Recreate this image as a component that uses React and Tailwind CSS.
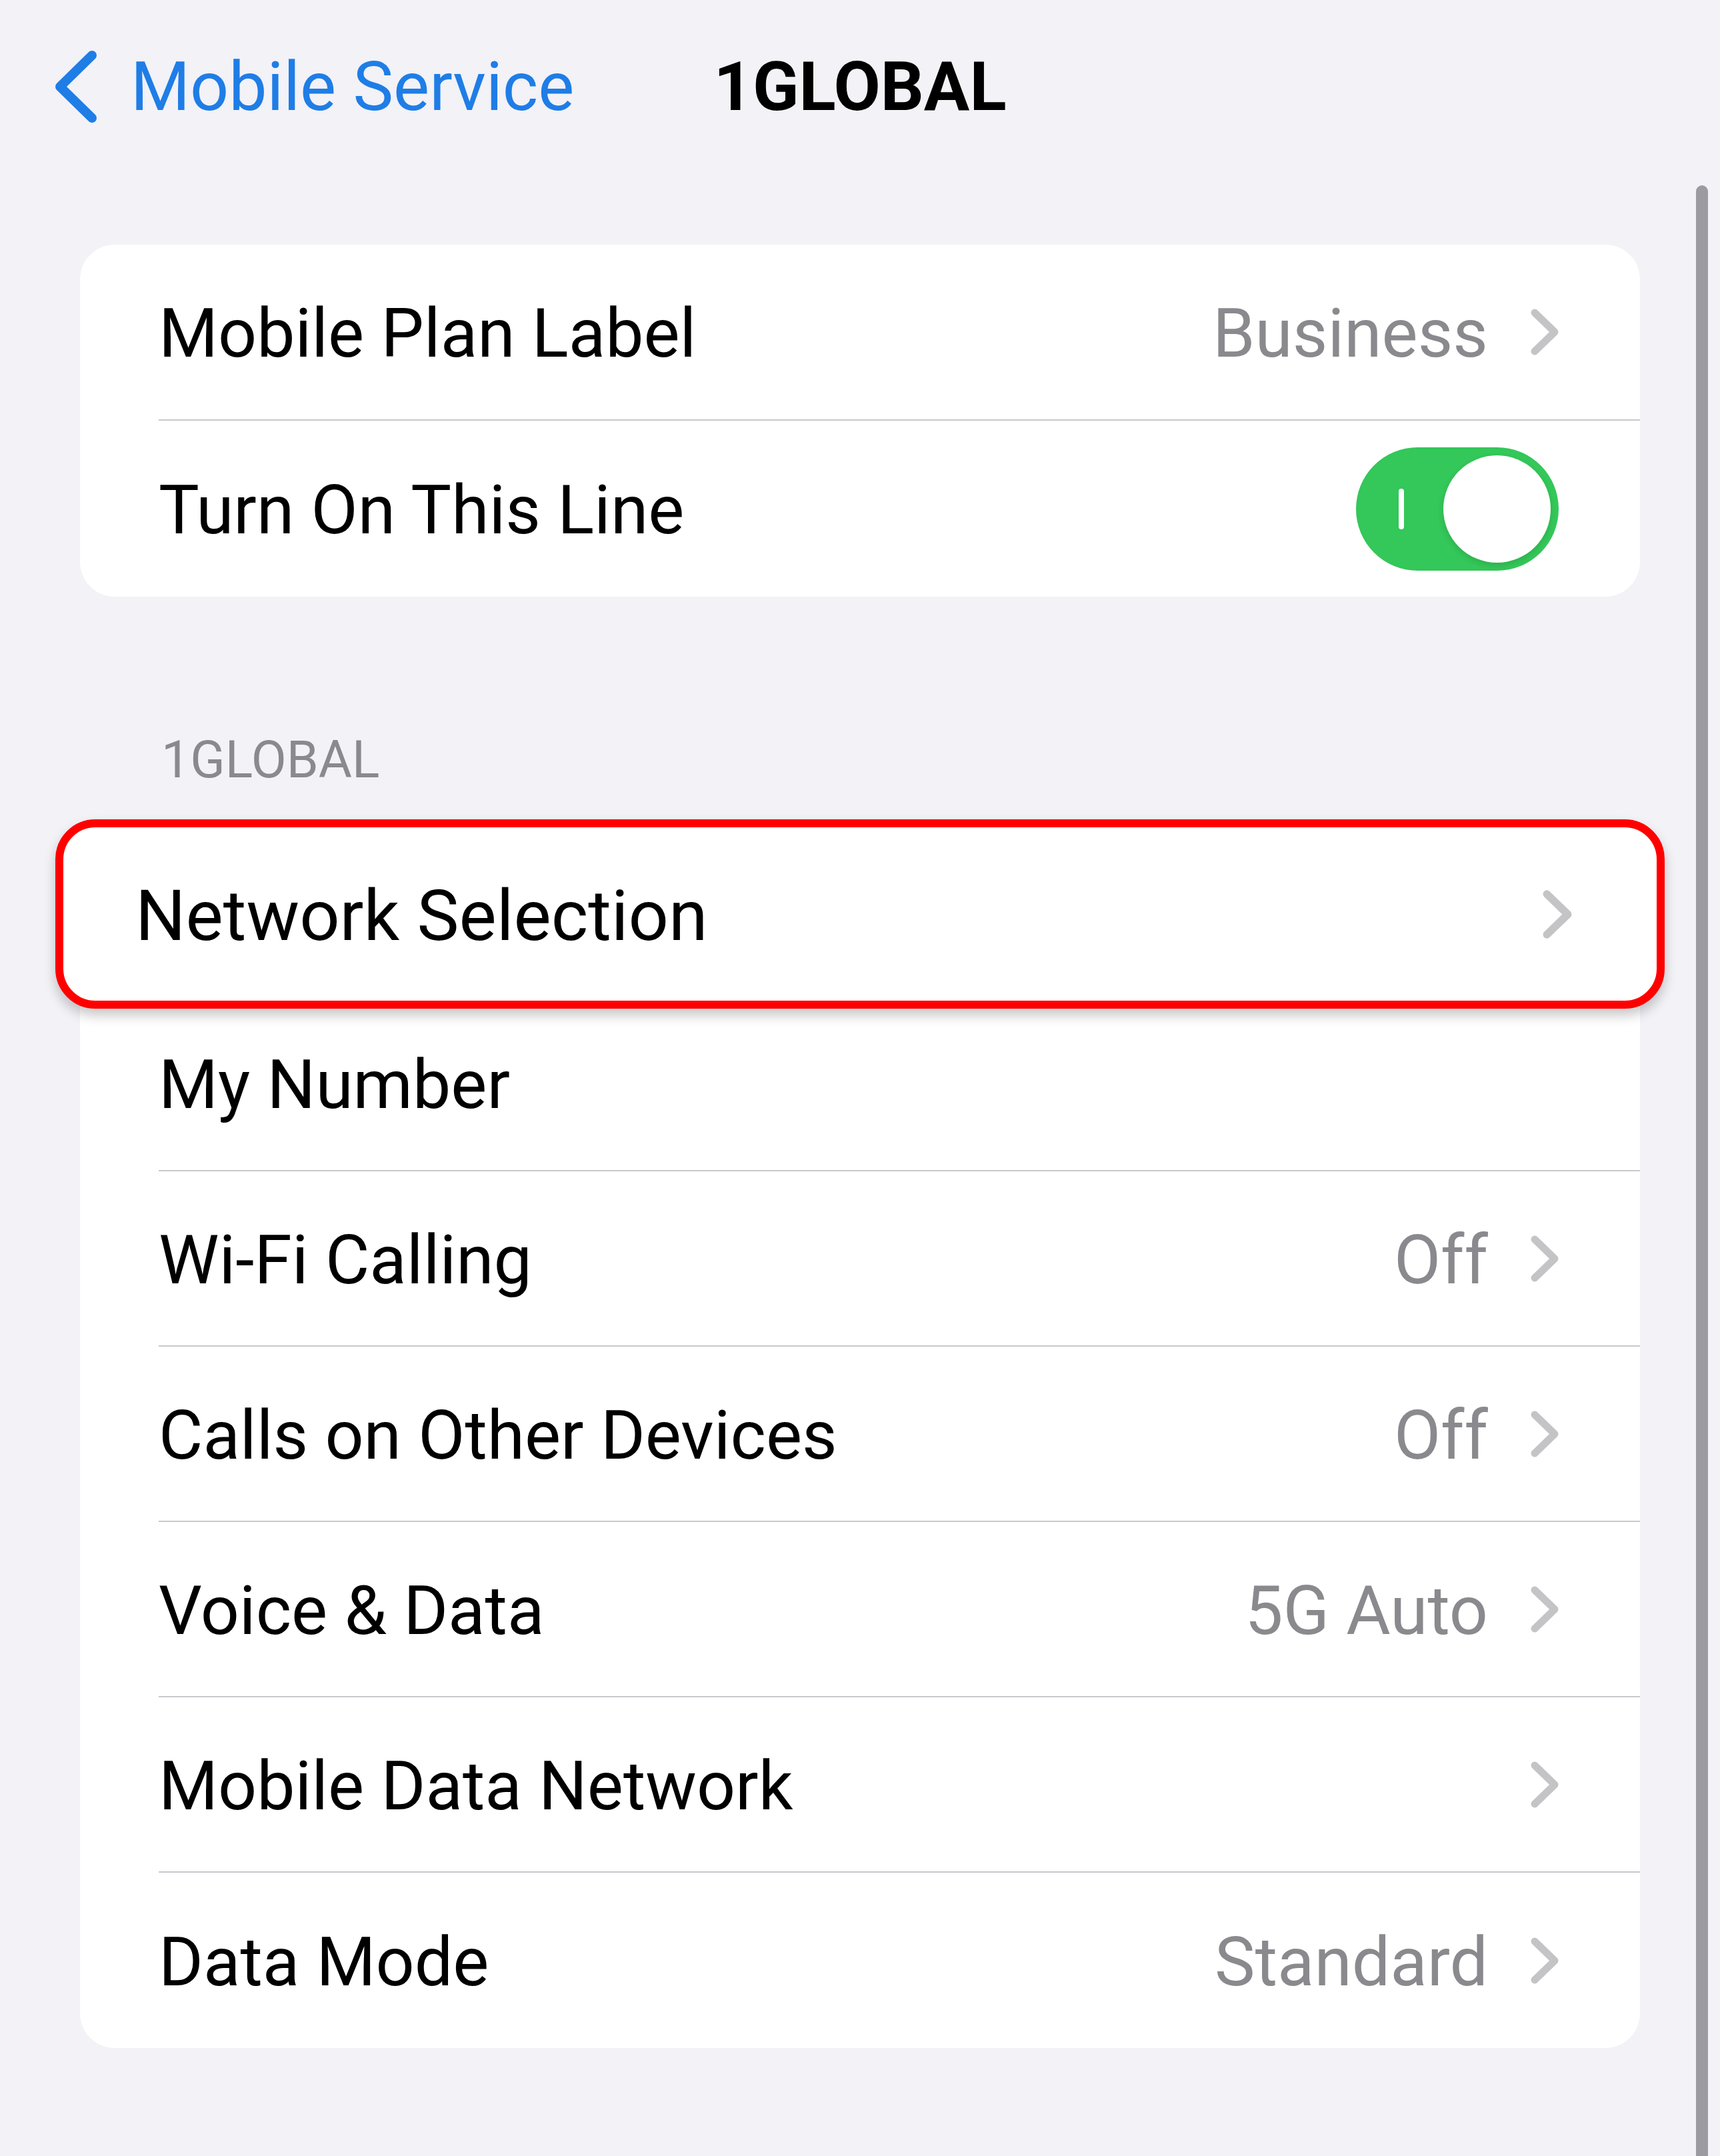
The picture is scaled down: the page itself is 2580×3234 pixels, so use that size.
import React from "react";

const planRows = [
  { label: "Mobile Plan Label", value: "Business", chevron: true },
  { label: "Turn On This Line", toggle: true },
];

const lineRows = [
  { label: "Network Selection", chevron: true, covered: true },
  { label: "My Number" },
  { label: "Wi-Fi Calling", value: "Off", chevron: true },
  { label: "Calls on Other Devices", value: "Off", chevron: true },
  { label: "Voice & Data", value: "5G Auto", chevron: true },
  { label: "Mobile Data Network", chevron: true },
  { label: "Data Mode", value: "Standard", chevron: true },
];

const Chevron = ({ className = "h-[70px] w-[42px]" }) => (
  <svg viewBox="0 0 42 70" className={className} fill="none">
    <path
      d="M6 6 L36 35 L6 64"
      stroke="#c4c4c7"
      strokeWidth="11"
      strokeLinecap="round"
      strokeLinejoin="round"
    />
  </svg>
);

const Toggle = () => (
  <div className="flex h-[185px] w-[304px] items-center rounded-full bg-[#34c759] px-[12px]">
    <div className="ml-[52px] h-[61px] w-[8px] rounded-sm bg-white" />
    <div className="ml-auto h-[161px] w-[161px] rounded-full bg-white shadow-[0_4px_10px_rgba(0,0,0,0.12)]" />
  </div>
);

const Row = ({ row, last, rowHeight }) => (
  <div className={`flex items-center pl-[118px] ${rowHeight}`}>
    <div
      className={`flex h-full flex-1 items-center pr-[122px] ${
        last ? "" : "border-b-2 border-[#c8c7cc]"
      }`}
    >
      {/* the covered row is drawn by the highlight on top of it */}
      {!row.covered && (
        <>
          <span className="pt-[4px] text-[102px] leading-none text-black">{row.label}</span>
          <div className="ml-auto flex items-center gap-[64px]">
            {row.value && (
              <span className="pt-[4px] text-[102px] leading-none text-[#8a8a8e]">{row.value}</span>
            )}
            {row.chevron && <Chevron />}
            {row.toggle && <Toggle />}
          </div>
        </>
      )}
    </div>
  </div>
);

export default function App() {
  return (
    <div className="relative h-[3234px] w-full overflow-hidden bg-[#f2f2f7] font-['Roboto',sans-serif]">
      {/* nav bar */}
      <div className="mt-[75px] grid h-[110px] grid-cols-[1fr_auto_1fr] items-center">
        <div className="flex items-center gap-[50px] pl-[82px]">
          <svg viewBox="0 0 64 110" className="h-[110px] w-[64px]" fill="none">
            <path
              d="M56 8 L8 55 L56 102"
              stroke="#1f7de6"
              strokeWidth="14"
              strokeLinecap="round"
              strokeLinejoin="round"
            />
          </svg>
          <span className="text-[102px] leading-none text-[#1f7de6]">Mobile Service</span>
        </div>
        <h1 className="text-[102px] font-bold leading-none text-black">1GLOBAL</h1>
        <div />
      </div>

      {/* plan card */}
      <div className="mx-[120px] mt-[182px] overflow-hidden rounded-[52px] bg-white">
        {planRows.map((row, i) => (
          <Row key={row.label} row={row} last={i === planRows.length - 1} rowHeight="h-[264px]" />
        ))}
      </div>

      <div className="mt-[207px] pl-[242px] text-[77px] leading-none text-[#8a8a8e]">1GLOBAL</div>

      {/* line settings card */}
      <div className="relative mx-[120px] mt-[52px] rounded-[52px] bg-white">
        {lineRows.map((row, i) => (
          <Row key={row.label} row={row} last={i === lineRows.length - 1} rowHeight="h-[263px]" />
        ))}

        {/* highlighted row */}
        <div className="absolute -left-[37px] -top-[2px] flex h-[284px] w-[2414px] items-center rounded-[60px] border-[12px] border-[#ff0000] bg-white pl-[108px] pr-[127px] shadow-[0_10px_18px_rgba(0,0,0,0.22)]">
          <span className="pt-[6px] text-[106px] leading-none text-black">Network Selection</span>
          <Chevron className="ml-auto h-[75px] w-[44px]" />
        </div>
      </div>

      {/* scroll indicator */}
      <div className="absolute bottom-0 right-[18px] top-[278px] w-[18px] rounded-t-full bg-[#9c9ba1]" />
    </div>
  );
}
